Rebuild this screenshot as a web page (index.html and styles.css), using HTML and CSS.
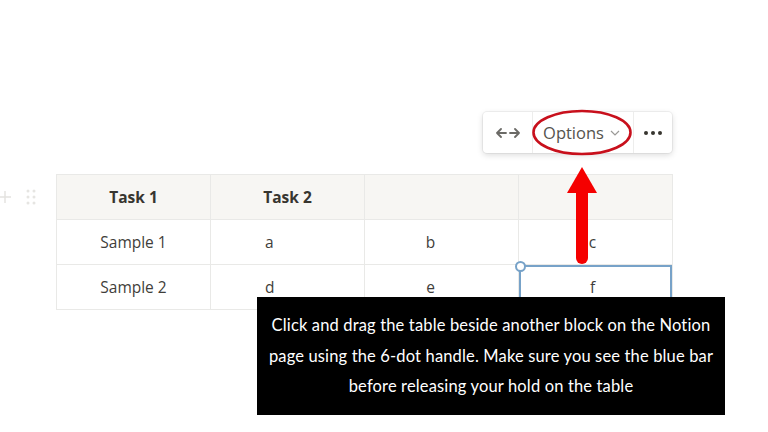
FILE: index.html
```html
<!DOCTYPE html>
<html>
<head>
<meta charset="utf-8">
<link rel="stylesheet" href="styles.css">
</head>
<body>
<div class="page">
  <div class="toolbar-row">
    <div class="toolbar">
      <div class="tb-item tb-width">
        <svg width="24" height="12" viewBox="0 0 24 12"><path d="M5 2 L1 6 L5 10 M1 6 H10 M14 6 H23 M19 2 L23 6 L19 10" fill="none" stroke="#6b6a66" stroke-width="1.8" stroke-linecap="round" stroke-linejoin="round"/></svg>
      </div>
      <div class="tb-item tb-options">
        <span>Options</span>
        <svg width="10" height="6" viewBox="0 0 10 6"><path d="M1 1 L5 5 L9 1" fill="none" stroke="#9b9a97" stroke-width="1.2"/></svg>
      </div>
      <div class="tb-item tb-more">
        <svg width="18" height="4" viewBox="0 0 18 4"><circle cx="2" cy="2" r="2" fill="#37352f"/><circle cx="9" cy="2" r="2" fill="#37352f"/><circle cx="16" cy="2" r="2" fill="#37352f"/></svg>
      </div>
    </div>
  </div>
  <div class="block">
    <div class="gutter">
      <svg class="plus" width="14" height="14" viewBox="0 0 14 14"><path d="M7 1 V13 M1 7 H13" stroke="#e3e2df" stroke-width="1.4"/></svg>
      <svg class="dots" width="10" height="16" viewBox="0 0 10 16"><g fill="#e6e5e2"><circle cx="2" cy="2" r="1.5"/><circle cx="8" cy="2" r="1.5"/><circle cx="2" cy="8" r="1.5"/><circle cx="8" cy="8" r="1.5"/><circle cx="2" cy="14" r="1.5"/><circle cx="8" cy="14" r="1.5"/></g></svg>
    </div>
    <table class="tbl">
      <tr class="head">
        <th>Task 1</th><th>Task 2</th><th></th><th></th>
      </tr>
      <tr>
        <td>Sample 1</td><td class="c2">a</td><td class="c3">b</td><td class="c4">c</td>
      </tr>
      <tr>
        <td>Sample 2</td><td class="c2">d</td><td class="c3">e</td><td class="c4 sel">f<span class="knob"></span></td>
      </tr>
    </table>
  </div>
</div>
<svg class="annot" width="768" height="432" viewBox="0 0 768 432">
  <ellipse cx="582" cy="132.5" rx="48.5" ry="21.5" fill="none" stroke="#c8101c" stroke-width="2.6"/>
  <path d="M582 167 L597 193 L567 193 Z" fill="#f50000"/>
  <path d="M582 190 V258" stroke="#f50000" stroke-width="12" stroke-linecap="round"/>
</svg>
<div class="tip">
  <p>Click and drag the table beside another block on the Notion page using the 6-dot handle. Make sure you see the blue bar before releasing your hold on the table</p>
</div>
</body>
</html>
```
FILE: styles.css
```css
html, body {
  margin: 0;
  padding: 0;
  background: #ffffff;
}
body {
  width: 768px;
  height: 432px;
  overflow: hidden;
  position: relative;
  font-family: "Open Sans", "Noto Sans", sans-serif;
  color: #37352f;
}
.page {
  padding-top: 112px;
  width: 672px;
}
.toolbar-row {
  display: flex;
  justify-content: flex-end;
  margin-bottom: 21px;
}
.toolbar {
  display: flex;
  height: 41px;
  width: 189px;
  background: #fff;
  border-radius: 4px;
  box-shadow: 0 0 0 1px rgba(15,15,15,0.05), 0 2px 6px rgba(15,15,15,0.15);
}
.tb-item {
  display: flex;
  align-items: center;
  justify-content: center;
}
.tb-width {
  width: 49px;
  border-right: 1px solid #ededec;
}
.tb-options {
  width: 101px;
  gap: 6px;
  border-right: 1px solid #ededec;
  font-size: 16.5px;
  color: #55534e;
  padding-right: 3px;
  box-sizing: border-box;
}
.tb-more {
  flex: 1;
}
.block {
  display: flex;
}
.gutter {
  width: 56px;
  flex: none;
  height: 45px;
  display: flex;
  align-items: center;
  gap: 14px;
  margin-left: -2px;
  padding-right: 2px;
}
.tbl {
  border-collapse: collapse;
  table-layout: fixed;
  width: 617px;
  font-size: 15.5px;
  color: #3f3e3a;
}
.tbl th, .tbl td {
  width: 154px;
  height: 45px;
  padding: 0;
  border: 1px solid #e9e9e7;
  text-align: center;
  box-sizing: border-box;
}
.tbl th {
  background: #f7f6f3;
  font-weight: 700;
  color: #37352f;
}
.tbl td.c2 {
  text-align: left;
  padding-left: 54px;
}
.tbl td.c3 {
  padding-right: 22px;
}
.tbl td.c4 {
  padding-right: 6px;
}
.tbl td.sel {
  position: relative;
  box-shadow: inset 0 0 0 2px #77a2c8;
}
.knob {
  position: absolute;
  left: -4px;
  top: -4px;
  width: 7px;
  height: 7px;
  border: 2px solid #77a2c8;
  border-radius: 50%;
  background: #fff;
}
.annot {
  position: absolute;
  left: 0;
  top: 0;
  pointer-events: none;
}
.tip {
  position: absolute;
  left: 257px;
  top: 297px;
  width: 468px;
  height: 118px;
  background: #000;
  color: #fff;
  display: flex;
  align-items: center;
  justify-content: center;
}
.tip p {
  margin: 0;
  width: 462px;
  text-align: center;
  font-family: "Lato", sans-serif;
  font-size: 16.5px;
  letter-spacing: 0.15px;
  line-height: 30.5px;
}
```
